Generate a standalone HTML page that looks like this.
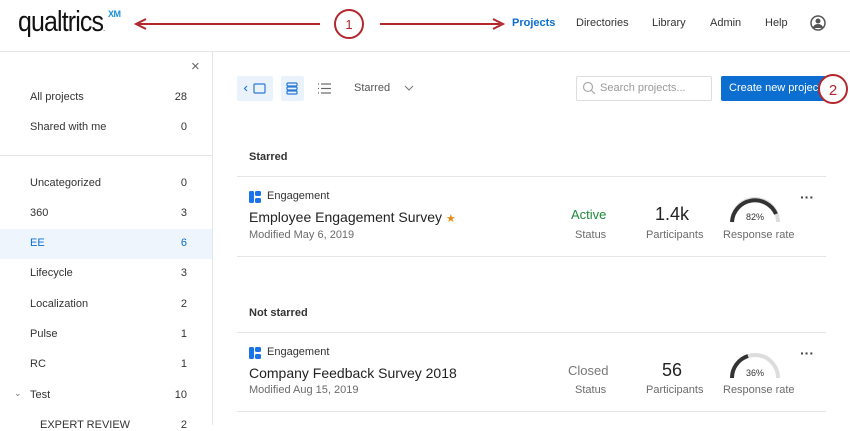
<!DOCTYPE html>
<html><head><style>
*{margin:0;padding:0;box-sizing:border-box}
body{width:850px;height:425px;overflow:hidden;background:#fff;font-family:"Liberation Sans",sans-serif;color:#333;position:relative}
.a{position:absolute;white-space:nowrap}
.s{font-size:11px;color:#333}
.n{font-size:11px;color:#333;right:663px;text-align:right}
.line{position:absolute;height:1px;background:#e5e5e5}
.g{color:#6b6b6b}
</style></head><body>
<div class="a" style="left:18px;top:6px;font-size:29px;color:#111;letter-spacing:-1px;transform:scaleX(.86);transform-origin:left">qualtrics<span style="font-size:8px">.</span></div>
<div class="a" style="left:108px;top:9px;font-size:9px;font-weight:bold;color:#1a8fd8;letter-spacing:-.5px">XM</div>
<svg class="a" style="left:0;top:0" width="850" height="50">
<g stroke="#b3272d" stroke-width="2" fill="none">
<line x1="138" y1="24" x2="320" y2="24"/><polyline points="146,19 136,24 146,29"/>
<line x1="380" y1="24" x2="500" y2="24"/><polyline points="493,19 503,24 493,29"/>
<circle cx="349" cy="24" r="14"/></g>
<text x="349" y="29" font-size="13" fill="#b3272d" text-anchor="middle" font-family="Liberation Sans">1</text>
<circle cx="818" cy="23" r="7" stroke="#555" stroke-width="1.5" fill="none"/><circle cx="818" cy="21" r="2.5" fill="#555"/><path d="M813 28a5 4 0 0 1 10 0" fill="#555"/>
</svg>
<div class="a" style="left:512px;top:17px;font-size:11px;color:#0b6ed0;font-weight:bold">Projects</div>
<div class="a s" style="left:576px;top:17px">Directories</div>
<div class="a s" style="left:652px;top:17px">Library</div>
<div class="a s" style="left:710px;top:17px">Admin</div>
<div class="a s" style="left:765px;top:17px">Help</div>
<div class="line" style="left:0;top:51px;width:850px"></div>
<div class="a" style="left:212px;top:52px;width:1px;height:373px;background:#e5e5e5"></div>
<div class="a" style="left:191px;top:58px;font-size:15px;color:#666">×</div>
<div class="a s" style="left:30px;top:91px">All projects</div><div class="a n" style="top:91px">28</div>
<div class="a s" style="left:30px;top:121px">Shared with me</div><div class="a n" style="top:121px">0</div>
<div class="line" style="left:0;top:155px;width:212px"></div>
<div class="a s" style="left:30px;top:177px">Uncategorized</div><div class="a n" style="top:177px">0</div>
<div class="a s" style="left:30px;top:207px">360</div><div class="a n" style="top:207px">3</div>
<div class="a" style="left:0;top:229px;width:212px;height:30px;background:#eef5fc"></div>
<div class="a s" style="left:30px;top:237px;color:#0b6ed0">EE</div><div class="a n" style="top:237px;color:#0b6ed0">6</div>
<div class="a s" style="left:30px;top:267px">Lifecycle</div><div class="a n" style="top:267px">3</div>
<div class="a s" style="left:30px;top:298px">Localization</div><div class="a n" style="top:298px">2</div>
<div class="a s" style="left:30px;top:328px">Pulse</div><div class="a n" style="top:328px">1</div>
<div class="a s" style="left:30px;top:358px">RC</div><div class="a n" style="top:358px">1</div>
<div class="a s" style="left:14px;top:388px;font-size:9px;color:#777">⌄</div>
<div class="a s" style="left:30px;top:389px">Test</div><div class="a n" style="top:389px">10</div>
<div class="a s" style="left:40px;top:419px">EXPERT REVIEW</div><div class="a n" style="top:419px">2</div>

<div class="a" style="left:237px;top:76px;width:36px;height:25px;background:#eaf3fc;border-radius:2px"></div>
<div class="a" style="left:281px;top:76px;width:23px;height:25px;background:#eaf3fc;border-radius:2px"></div>
<svg class="a" style="left:237px;top:76px" width="100" height="25" fill="none" stroke="#2b7ad6" stroke-width="1.2">
<polyline points="10,10 7.5,12.5 10,15"/><rect x="17" y="8" width="11" height="9" rx="1"/>
<rect x="50" y="7" width="10" height="3" rx="1"/><rect x="50" y="11" width="10" height="3" rx="1"/><rect x="50" y="15" width="10" height="3" rx="1"/>
<g stroke="#666"><line x1="84" y1="8" x2="94" y2="8"/><line x1="84" y1="12.5" x2="94" y2="12.5"/><line x1="84" y1="17" x2="94" y2="17"/><line x1="81" y1="8" x2="82" y2="8"/><line x1="81" y1="12.5" x2="82" y2="12.5"/><line x1="81" y1="17" x2="82" y2="17"/></g>
</svg>
<div class="a s" style="left:354px;top:82px;color:#555">Starred</div>
<svg class="a" style="left:404px;top:85px" width="10" height="6"><polyline points="1,1 5,5 9,1" fill="none" stroke="#777"/></svg>
<div class="a" style="left:576px;top:76px;width:136px;height:25px;border:1px solid #ddd;border-radius:2px"></div>
<svg class="a" style="left:582px;top:81px" width="14" height="14" fill="none" stroke="#aaa" stroke-width="1.2"><circle cx="6" cy="6" r="4.5"/><line x1="9.5" y1="9.5" x2="13" y2="13"/></svg>
<div class="a" style="left:600px;top:82px;font-size:11px;color:#999">Search projects...</div>
<div class="a" style="left:721px;top:76px;width:105px;height:25px;background:#0b6ed0;border-radius:2px;color:#fff;font-size:11px;padding:6px 0 0 8px">Create new project</div>
<svg class="a" style="left:815px;top:74px" width="36" height="32"><circle cx="18" cy="15" r="14" fill="#fff" stroke="#b3272d" stroke-width="2"/><text x="18" y="21" font-size="15" fill="#b3272d" text-anchor="middle" font-family="Liberation Sans">2</text></svg>

<div class="a" style="left:249px;top:151px;font-size:11px;font-weight:bold">Starred</div>
<div class="line" style="left:237px;top:176px;width:589px"></div>
<div class="line" style="left:237px;top:256px;width:589px"></div>
<div class="a" style="left:249px;top:307px;font-size:11px;font-weight:bold">Not starred</div>
<div class="line" style="left:237px;top:332px;width:589px"></div>
<div class="line" style="left:237px;top:411px;width:589px"></div>

<svg class="a" style="left:249px;top:191px" width="12" height="12"><rect x="0" y="0" width="5" height="12" rx="1.5" fill="#1a73e8"/><rect x="6" y="0" width="6" height="5" rx="1.5" fill="#1a73e8"/><rect x="6" y="7" width="6" height="5" rx="1.5" fill="#1a73e8"/></svg>
<div class="a" style="left:267px;top:190px;font-size:11px">Engagement</div>
<div class="a" style="left:249px;top:209px;font-size:14px;color:#222">Employee Engagement Survey <span style="color:#e98a15;font-size:11px">★</span></div>
<div class="a g" style="left:249px;top:229px;font-size:11px">Modified May 6, 2019</div>
<div class="a" style="left:571px;top:207px;font-size:13px;color:#1b8a3a">Active</div>
<div class="a g" style="left:575px;top:229px;font-size:11px">Status</div>
<div class="a" style="left:655px;top:204px;font-size:18px;color:#222">1.4k</div>
<div class="a g" style="left:646px;top:229px;font-size:11px">Participants</div>
<svg class="a" style="left:726px;top:192px" width="60" height="34" fill="none" stroke-width="4"><path d="M6 30A23 23 0 0 1 52 30" stroke="#ddd"/><path d="M6 30A23 23 0 0 1 50 22" stroke="#333"/><text x="29" y="28" font-size="9" fill="#333" stroke="none" text-anchor="middle" font-family="Liberation Sans">82%</text></svg>
<div class="a g" style="left:723px;top:229px;font-size:11px">Response rate</div>
<div class="a" style="left:800px;top:189px;font-size:14px;font-weight:bold;color:#444">···</div>

<svg class="a" style="left:249px;top:347px" width="12" height="12"><rect x="0" y="0" width="5" height="12" rx="1.5" fill="#1a73e8"/><rect x="6" y="0" width="6" height="5" rx="1.5" fill="#1a73e8"/><rect x="6" y="7" width="6" height="5" rx="1.5" fill="#1a73e8"/></svg>
<div class="a" style="left:267px;top:346px;font-size:11px">Engagement</div>
<div class="a" style="left:249px;top:365px;font-size:14px;color:#222">Company Feedback Survey 2018</div>
<div class="a g" style="left:249px;top:384px;font-size:11px">Modified Aug 15, 2019</div>
<div class="a g" style="left:568px;top:363px;font-size:13px;color:#777">Closed</div>
<div class="a g" style="left:575px;top:384px;font-size:11px">Status</div>
<div class="a" style="left:662px;top:360px;font-size:18px;color:#222">56</div>
<div class="a g" style="left:646px;top:384px;font-size:11px">Participants</div>
<svg class="a" style="left:726px;top:348px" width="60" height="34" fill="none" stroke-width="4"><path d="M6 30A23 23 0 0 1 52 30" stroke="#ddd"/><path d="M6 30A23 23 0 0 1 22 8" stroke="#333"/><text x="29" y="28" font-size="9" fill="#333" stroke="none" text-anchor="middle" font-family="Liberation Sans">36%</text></svg>
<div class="a g" style="left:723px;top:384px;font-size:11px">Response rate</div>
<div class="a" style="left:800px;top:345px;font-size:14px;font-weight:bold;color:#444">···</div>
</body></html>
